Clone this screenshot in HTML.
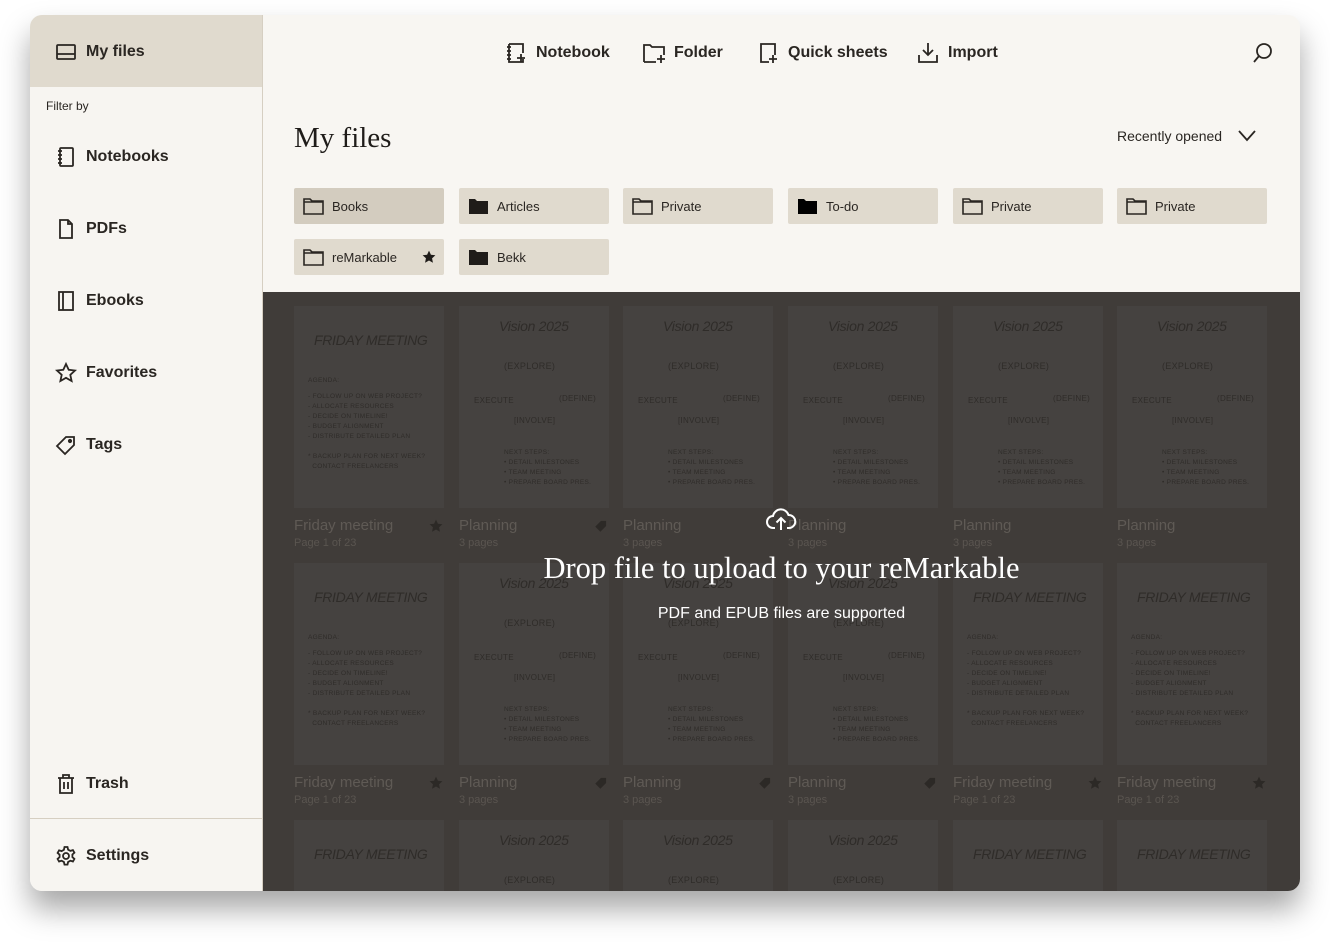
<!DOCTYPE html>
<html><head><meta charset="utf-8">
<style>
*{box-sizing:border-box;margin:0;padding:0}
html,body{width:1330px;height:946px;overflow:hidden}
body{background:#fff;font-family:"Liberation Sans",sans-serif;position:relative;color:#2a2622}
.win{position:absolute;left:30px;top:15px;width:1270px;height:876px;border-radius:12px;overflow:hidden;background:#f8f6f2;box-shadow:0 18px 30px rgba(0,0,0,.35)}
.side{position:absolute;left:0;top:0;width:233px;height:876px;background:#f7f5f1;border-right:1px solid #d6cfc2}
.top{position:absolute;left:0;top:0;width:232px;height:72px;background:#e0dace}
.it{position:absolute;left:25px;display:flex;align-items:center;font-size:16px;font-weight:bold;color:#2a2622}
.it svg{width:22px;height:22px;margin-right:9px;fill:none;stroke:#2a2622;stroke-width:1.8}
.filter{position:absolute;left:16px;top:84px;font-size:12px;color:#2a2622}
.div{position:absolute;left:0;top:803px;width:232px;height:1px;background:#d6cfc2}
.tb{position:absolute;top:26px;display:flex;align-items:center;font-size:16px;font-weight:bold;color:#2a2622}
.tb svg{width:24px;height:24px;margin-right:8px;fill:none;stroke:#2a2622;stroke-width:1.8}
h1{position:absolute;left:264px;top:107px;font-family:"Liberation Serif",serif;font-weight:normal;font-size:29px;color:#1f1c19}
.sort{position:absolute;left:1087px;top:113px;font-size:14px;color:#2a2622}
.chip{position:absolute;width:150px;height:36px;background:#e0dace;border-radius:2px;display:flex;align-items:center;padding-left:9px;font-size:13px;color:#2a2622}
.chip svg{width:21px;height:18px;margin-right:8px}
.ov{position:absolute;left:233px;top:277px;width:1037px;height:599px;background:#403c39;overflow:hidden}
.card{position:absolute;width:150px}
.th{height:202px;background:#454240;position:relative;overflow:hidden;font-family:"Liberation Sans",sans-serif;color:#2f2c29}
.ti{margin-top:9px;font-size:15px;color:#5f5a55;position:relative}
.su{margin-top:3px;font-size:11px;color:#5a5550}
.ic{position:absolute;right:1px;top:2px;width:14px;height:14px;fill:#2c2926}
.th .h{position:absolute;left:20px;top:26px;font-size:14px;letter-spacing:-.3px;font-style:italic}
.th .l{position:absolute;left:14px;font-size:6.5px;letter-spacing:.3px;line-height:10px}
.drop{position:absolute;left:233px;width:1037px;text-align:center;color:#fff}
</style></head><body>
<div class="win">
<div class="side">
 <div class="top"></div>
 <div class="it" style="top:26px"><svg viewBox="0 0 22 22"><rect x="2" y="4" width="18" height="14" rx="1"/><path d="M2 13h18"/></svg>My files</div>
 <div class="filter">Filter by</div>
 <div class="it" style="top:131px"><svg viewBox="0 0 22 22"><rect x="5" y="2" width="13" height="18" rx="1"/><path d="M3 5h4M3 9h4M3 13h4M3 17h4"/></svg>Notebooks</div>
 <div class="it" style="top:203px"><svg viewBox="0 0 22 22"><path d="M5 2h8l4 4v14H5z M13 2v4h4"/></svg>PDFs</div>
 <div class="it" style="top:275px"><svg viewBox="0 0 22 22"><rect x="4" y="2" width="14" height="18"/><path d="M8 2v18"/></svg>Ebooks</div>
 <div class="it" style="top:347px"><svg viewBox="0 0 22 22"><path d="M11 2l2.7 5.8 6.3.7-4.7 4.3 1.3 6.2L11 15.8 5.4 19l1.3-6.2L2 8.5l6.3-.7z"/></svg>Favorites</div>
 <div class="it" style="top:419px"><svg viewBox="0 0 22 22"><path d="M2 12l9-9h8v8l-9 9z"/><circle cx="15" cy="7" r="1.2" fill="#2a2622"/></svg>Tags</div>
 <div class="it" style="top:758px"><svg viewBox="0 0 22 22"><path d="M3 5h16M8 5V2h6v3M5 5v15h12V5M9 9v7M13 9v7"/></svg>Trash</div>
 <div class="div"></div>
 <div class="it" style="top:830px"><svg viewBox="0 0 22 22"><circle cx="11" cy="11" r="3"/><path d="M9.5 2h3l.6 2.6 2.3 1.3 2.5-.8 1.5 2.6-2 1.8v2.6l2 1.8-1.5 2.6-2.5-.8-2.3 1.3-.6 2.6h-3l-.6-2.6-2.3-1.3-2.5.8-1.5-2.6 2-1.8V9.7l-2-1.8 1.5-2.6 2.5.8 2.3-1.3z"/></svg>Settings</div>
</div>

<div class="tb" style="left:474px"><svg viewBox="0 0 24 24"><path d="M5 3h14v9M19 18v3H5V3M3 6h4M3 10h4M3 14h4M3 18h4M13 17h8M17 13v8"/></svg>Notebook</div>
<div class="tb" style="left:612px"><svg viewBox="0 0 24 24"><path d="M2 21V4h6l2 2h12v8M14 21H2M15 18h8M19 14v8"/></svg>Folder</div>
<div class="tb" style="left:726px"><svg viewBox="0 0 24 24"><path d="M13 21H5V3h14v11M13 18h8M17 14v8"/></svg>Quick sheets</div>
<div class="tb" style="left:886px"><svg viewBox="0 0 24 24"><path d="M12 2v12M7 9l5 5 5-5M3 14v7h18v-7"/></svg>Import</div>
<svg style="position:absolute;left:1222px;top:27px" width="22" height="22" viewBox="0 0 22 22" fill="none" stroke="#2a2622" stroke-width="1.8"><circle cx="12" cy="9" r="7"/><path d="M7 14l-5 6"/></svg>

<h1>My files</h1>
<div class="sort">Recently opened</div>
<svg style="position:absolute;left:1207px;top:114px" width="20" height="14" viewBox="0 0 20 14" fill="none" stroke="#2a2622" stroke-width="1.8"><path d="M2 2l8 9 8-9"/></svg>

<div class="chip" style="left:264px;top:173px;background:#d3ccbf"><svg viewBox="0 0 21 18" fill="none" stroke="#2a2622" stroke-width="1.6"><path d="M1 2h6l2 2h11v13H1z M1 5h19"/></svg>Books</div>
<div class="chip" style="left:429px;top:173px"><svg viewBox="0 0 21 18"><path d="M1 2h6l2 2h11v13H1z" fill="#1f1c19"/></svg>Articles</div>
<div class="chip" style="left:593px;top:173px"><svg viewBox="0 0 21 18" fill="none" stroke="#2a2622" stroke-width="1.6"><path d="M1 2h6l2 2h11v13H1z M1 5h19"/></svg>Private</div>
<div class="chip" style="left:758px;top:173px"><svg viewBox="0 0 21 18"><path d="M1 2h6l2 2h11v13H1z" fill="#000"/></svg>To-do</div>
<div class="chip" style="left:923px;top:173px"><svg viewBox="0 0 21 18" fill="none" stroke="#2a2622" stroke-width="1.6"><path d="M1 2h6l2 2h11v13H1z M1 5h19"/></svg>Private</div>
<div class="chip" style="left:1087px;top:173px"><svg viewBox="0 0 21 18" fill="none" stroke="#2a2622" stroke-width="1.6"><path d="M1 2h6l2 2h11v13H1z M1 5h19"/></svg>Private</div>
<div class="chip" style="left:264px;top:224px"><svg viewBox="0 0 21 18" fill="none" stroke="#2a2622" stroke-width="1.6"><path d="M1 2h6l2 2h11v13H1z M1 5h19"/></svg>reMarkable<svg style="position:absolute;left:128px;width:14px;height:14px" viewBox="0 0 22 22"><path fill="#1f1c19" d="M11 1l3 6.5 7 .8-5.2 4.8 1.4 7L11 16.5 4.8 20l1.4-7L1 8.3l7-.8z"/></svg></div>
<div class="chip" style="left:429px;top:224px"><svg viewBox="0 0 21 18"><path d="M1 2h6l2 2h11v13H1z" fill="#1f1c19"/></svg>Bekk</div>

<div class="ov">
<div class="card" style="left:31px;top:14px"><div class="th"><div class="h">FRIDAY MEETING</div><div class="l" style="top:70px">AGENDA:</div><div class="l" style="top:86px">- FOLLOW UP ON WEB PROJECT?<br>- ALLOCATE RESOURCES<br>- DECIDE ON TIMELINE!<br>- BUDGET ALIGNMENT<br>- DISTRIBUTE DETAILED PLAN<br><br>* BACKUP PLAN FOR NEXT WEEK?<br>&nbsp;&nbsp;CONTACT FREELANCERS</div></div><div class="ti">Friday meeting<svg class="ic" viewBox="0 0 22 22"><path d="M11 1l3 6.5 7 .8-5.2 4.8 1.4 7L11 16.5 4.8 20l1.4-7L1 8.3l7-.8z"/></svg></div><div class="su">Page 1 of 23</div></div>
<div class="card" style="left:196px;top:14px"><div class="th"><div class="h" style="left:40px;top:12px">Vision 2025</div><div class="l" style="left:45px;top:55px;font-size:9px">(EXPLORE)</div><div class="l" style="left:15px;top:90px;font-size:8px">EXECUTE</div><div class="l" style="left:100px;top:88px;font-size:8px">(DEFINE)</div><div class="l" style="left:55px;top:110px;font-size:8px">[INVOLVE]</div><div class="l" style="left:45px;top:142px">NEXT STEPS:<br>• DETAIL MILESTONES<br>• TEAM MEETING<br>• PREPARE BOARD PRES.</div></div><div class="ti">Planning<svg class="ic" viewBox="0 0 22 22"><path d="M2 12l9-9h8v8l-9 9z"/></svg></div><div class="su">3 pages</div></div>
<div class="card" style="left:360px;top:14px"><div class="th"><div class="h" style="left:40px;top:12px">Vision 2025</div><div class="l" style="left:45px;top:55px;font-size:9px">(EXPLORE)</div><div class="l" style="left:15px;top:90px;font-size:8px">EXECUTE</div><div class="l" style="left:100px;top:88px;font-size:8px">(DEFINE)</div><div class="l" style="left:55px;top:110px;font-size:8px">[INVOLVE]</div><div class="l" style="left:45px;top:142px">NEXT STEPS:<br>• DETAIL MILESTONES<br>• TEAM MEETING<br>• PREPARE BOARD PRES.</div></div><div class="ti">Planning</div><div class="su">3 pages</div></div>
<div class="card" style="left:525px;top:14px"><div class="th"><div class="h" style="left:40px;top:12px">Vision 2025</div><div class="l" style="left:45px;top:55px;font-size:9px">(EXPLORE)</div><div class="l" style="left:15px;top:90px;font-size:8px">EXECUTE</div><div class="l" style="left:100px;top:88px;font-size:8px">(DEFINE)</div><div class="l" style="left:55px;top:110px;font-size:8px">[INVOLVE]</div><div class="l" style="left:45px;top:142px">NEXT STEPS:<br>• DETAIL MILESTONES<br>• TEAM MEETING<br>• PREPARE BOARD PRES.</div></div><div class="ti">Planning</div><div class="su">3 pages</div></div>
<div class="card" style="left:690px;top:14px"><div class="th"><div class="h" style="left:40px;top:12px">Vision 2025</div><div class="l" style="left:45px;top:55px;font-size:9px">(EXPLORE)</div><div class="l" style="left:15px;top:90px;font-size:8px">EXECUTE</div><div class="l" style="left:100px;top:88px;font-size:8px">(DEFINE)</div><div class="l" style="left:55px;top:110px;font-size:8px">[INVOLVE]</div><div class="l" style="left:45px;top:142px">NEXT STEPS:<br>• DETAIL MILESTONES<br>• TEAM MEETING<br>• PREPARE BOARD PRES.</div></div><div class="ti">Planning</div><div class="su">3 pages</div></div>
<div class="card" style="left:854px;top:14px"><div class="th"><div class="h" style="left:40px;top:12px">Vision 2025</div><div class="l" style="left:45px;top:55px;font-size:9px">(EXPLORE)</div><div class="l" style="left:15px;top:90px;font-size:8px">EXECUTE</div><div class="l" style="left:100px;top:88px;font-size:8px">(DEFINE)</div><div class="l" style="left:55px;top:110px;font-size:8px">[INVOLVE]</div><div class="l" style="left:45px;top:142px">NEXT STEPS:<br>• DETAIL MILESTONES<br>• TEAM MEETING<br>• PREPARE BOARD PRES.</div></div><div class="ti">Planning</div><div class="su">3 pages</div></div>
<div class="card" style="left:31px;top:271px"><div class="th"><div class="h">FRIDAY MEETING</div><div class="l" style="top:70px">AGENDA:</div><div class="l" style="top:86px">- FOLLOW UP ON WEB PROJECT?<br>- ALLOCATE RESOURCES<br>- DECIDE ON TIMELINE!<br>- BUDGET ALIGNMENT<br>- DISTRIBUTE DETAILED PLAN<br><br>* BACKUP PLAN FOR NEXT WEEK?<br>&nbsp;&nbsp;CONTACT FREELANCERS</div></div><div class="ti">Friday meeting<svg class="ic" viewBox="0 0 22 22"><path d="M11 1l3 6.5 7 .8-5.2 4.8 1.4 7L11 16.5 4.8 20l1.4-7L1 8.3l7-.8z"/></svg></div><div class="su">Page 1 of 23</div></div>
<div class="card" style="left:196px;top:271px"><div class="th"><div class="h" style="left:40px;top:12px">Vision 2025</div><div class="l" style="left:45px;top:55px;font-size:9px">(EXPLORE)</div><div class="l" style="left:15px;top:90px;font-size:8px">EXECUTE</div><div class="l" style="left:100px;top:88px;font-size:8px">(DEFINE)</div><div class="l" style="left:55px;top:110px;font-size:8px">[INVOLVE]</div><div class="l" style="left:45px;top:142px">NEXT STEPS:<br>• DETAIL MILESTONES<br>• TEAM MEETING<br>• PREPARE BOARD PRES.</div></div><div class="ti">Planning<svg class="ic" viewBox="0 0 22 22"><path d="M2 12l9-9h8v8l-9 9z"/></svg></div><div class="su">3 pages</div></div>
<div class="card" style="left:360px;top:271px"><div class="th"><div class="h" style="left:40px;top:12px">Vision 2025</div><div class="l" style="left:45px;top:55px;font-size:9px">(EXPLORE)</div><div class="l" style="left:15px;top:90px;font-size:8px">EXECUTE</div><div class="l" style="left:100px;top:88px;font-size:8px">(DEFINE)</div><div class="l" style="left:55px;top:110px;font-size:8px">[INVOLVE]</div><div class="l" style="left:45px;top:142px">NEXT STEPS:<br>• DETAIL MILESTONES<br>• TEAM MEETING<br>• PREPARE BOARD PRES.</div></div><div class="ti">Planning<svg class="ic" viewBox="0 0 22 22"><path d="M2 12l9-9h8v8l-9 9z"/></svg></div><div class="su">3 pages</div></div>
<div class="card" style="left:525px;top:271px"><div class="th"><div class="h" style="left:40px;top:12px">Vision 2025</div><div class="l" style="left:45px;top:55px;font-size:9px">(EXPLORE)</div><div class="l" style="left:15px;top:90px;font-size:8px">EXECUTE</div><div class="l" style="left:100px;top:88px;font-size:8px">(DEFINE)</div><div class="l" style="left:55px;top:110px;font-size:8px">[INVOLVE]</div><div class="l" style="left:45px;top:142px">NEXT STEPS:<br>• DETAIL MILESTONES<br>• TEAM MEETING<br>• PREPARE BOARD PRES.</div></div><div class="ti">Planning<svg class="ic" viewBox="0 0 22 22"><path d="M2 12l9-9h8v8l-9 9z"/></svg></div><div class="su">3 pages</div></div>
<div class="card" style="left:690px;top:271px"><div class="th"><div class="h">FRIDAY MEETING</div><div class="l" style="top:70px">AGENDA:</div><div class="l" style="top:86px">- FOLLOW UP ON WEB PROJECT?<br>- ALLOCATE RESOURCES<br>- DECIDE ON TIMELINE!<br>- BUDGET ALIGNMENT<br>- DISTRIBUTE DETAILED PLAN<br><br>* BACKUP PLAN FOR NEXT WEEK?<br>&nbsp;&nbsp;CONTACT FREELANCERS</div></div><div class="ti">Friday meeting<svg class="ic" viewBox="0 0 22 22"><path d="M11 1l3 6.5 7 .8-5.2 4.8 1.4 7L11 16.5 4.8 20l1.4-7L1 8.3l7-.8z"/></svg></div><div class="su">Page 1 of 23</div></div>
<div class="card" style="left:854px;top:271px"><div class="th"><div class="h">FRIDAY MEETING</div><div class="l" style="top:70px">AGENDA:</div><div class="l" style="top:86px">- FOLLOW UP ON WEB PROJECT?<br>- ALLOCATE RESOURCES<br>- DECIDE ON TIMELINE!<br>- BUDGET ALIGNMENT<br>- DISTRIBUTE DETAILED PLAN<br><br>* BACKUP PLAN FOR NEXT WEEK?<br>&nbsp;&nbsp;CONTACT FREELANCERS</div></div><div class="ti">Friday meeting<svg class="ic" viewBox="0 0 22 22"><path d="M11 1l3 6.5 7 .8-5.2 4.8 1.4 7L11 16.5 4.8 20l1.4-7L1 8.3l7-.8z"/></svg></div><div class="su">Page 1 of 23</div></div>
<div class="card" style="left:31px;top:528px"><div class="th" style="height:71px"><div class="h">FRIDAY MEETING</div></div></div>
<div class="card" style="left:196px;top:528px"><div class="th" style="height:71px"><div class="h" style="left:40px;top:12px">Vision 2025</div><div class="l" style="left:45px;top:55px;font-size:9px">(EXPLORE)</div></div></div>
<div class="card" style="left:360px;top:528px"><div class="th" style="height:71px"><div class="h" style="left:40px;top:12px">Vision 2025</div><div class="l" style="left:45px;top:55px;font-size:9px">(EXPLORE)</div></div></div>
<div class="card" style="left:525px;top:528px"><div class="th" style="height:71px"><div class="h" style="left:40px;top:12px">Vision 2025</div><div class="l" style="left:45px;top:55px;font-size:9px">(EXPLORE)</div></div></div>
<div class="card" style="left:690px;top:528px"><div class="th" style="height:71px"><div class="h">FRIDAY MEETING</div></div></div>
<div class="card" style="left:854px;top:528px"><div class="th" style="height:71px"><div class="h">FRIDAY MEETING</div></div></div>
</div>

<svg style="position:absolute;left:735px;top:491px" width="32" height="26" viewBox="0 0 32 26" fill="none" stroke="#fff" stroke-width="2"><path d="M10 22H8a6 6 0 0 1 0-12 8 8 0 0 1 15.5-1A6.5 6.5 0 0 1 24 22h-2M16 24V12M11.5 16.5L16 12l4.5 4.5"/></svg>
<div class="drop" style="top:536px;font-family:'Liberation Serif',serif;font-size:30.5px">Drop file to upload to your reMarkable</div>
<div class="drop" style="top:590px;font-size:16px">PDF and EPUB files are supported</div>
</div>
</body></html>
